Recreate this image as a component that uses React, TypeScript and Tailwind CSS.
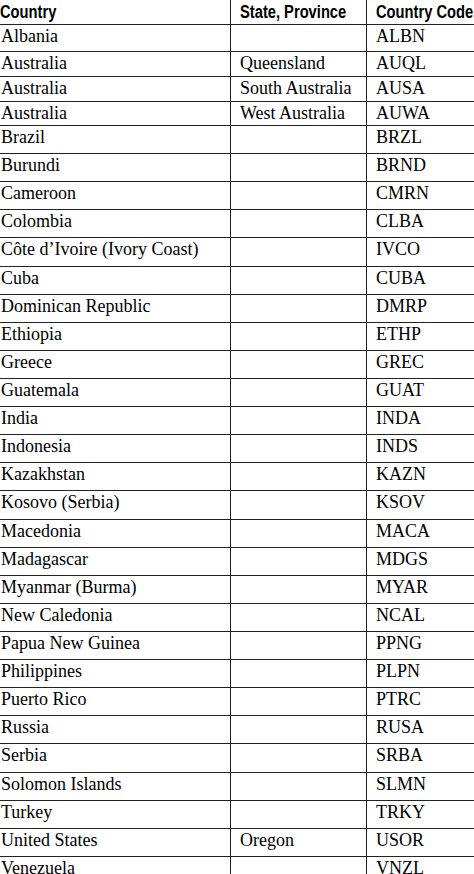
import React from 'react'

type Row = { country: string; state?: string; code: string; h: string }

// row heights follow the source scan: the three Australia sub-rows are tighter
const rows: Row[] = [
  { country: 'Albania', code: 'ALBN', h: 'h-[27px]' },
  { country: 'Australia', state: 'Queensland', code: 'AUQL', h: 'h-[25px]' },
  { country: 'Australia', state: 'South Australia', code: 'AUSA', h: 'h-[25px]' },
  { country: 'Australia', state: 'West Australia', code: 'AUWA', h: 'h-[24px]' },
  { country: 'Brazil', code: 'BRZL', h: 'h-[28.12px]' },
  { country: 'Burundi', code: 'BRND', h: 'h-[28.12px]' },
  { country: 'Cameroon', code: 'CMRN', h: 'h-[28.12px]' },
  { country: 'Colombia', code: 'CLBA', h: 'h-[28.12px]' },
  { country: 'Côte d\u2019Ivoire (Ivory Coast)', code: 'IVCO', h: 'h-[28.12px]' },
  { country: 'Cuba', code: 'CUBA', h: 'h-[28.12px]' },
  { country: 'Dominican Republic', code: 'DMRP', h: 'h-[28.12px]' },
  { country: 'Ethiopia', code: 'ETHP', h: 'h-[28.12px]' },
  { country: 'Greece', code: 'GREC', h: 'h-[28.12px]' },
  { country: 'Guatemala', code: 'GUAT', h: 'h-[28.12px]' },
  { country: 'India', code: 'INDA', h: 'h-[28.12px]' },
  { country: 'Indonesia', code: 'INDS', h: 'h-[28.12px]' },
  { country: 'Kazakhstan', code: 'KAZN', h: 'h-[28.12px]' },
  { country: 'Kosovo (Serbia)', code: 'KSOV', h: 'h-[28.12px]' },
  { country: 'Macedonia', code: 'MACA', h: 'h-[28.12px]' },
  { country: 'Madagascar', code: 'MDGS', h: 'h-[28.12px]' },
  { country: 'Myanmar (Burma)', code: 'MYAR', h: 'h-[28.12px]' },
  { country: 'New Caledonia', code: 'NCAL', h: 'h-[28.12px]' },
  { country: 'Papua New Guinea', code: 'PPNG', h: 'h-[28.12px]' },
  { country: 'Philippines', code: 'PLPN', h: 'h-[28.12px]' },
  { country: 'Puerto Rico', code: 'PTRC', h: 'h-[28.12px]' },
  { country: 'Russia', code: 'RUSA', h: 'h-[28.12px]' },
  { country: 'Serbia', code: 'SRBA', h: 'h-[28.12px]' },
  { country: 'Solomon Islands', code: 'SLMN', h: 'h-[28.12px]' },
  { country: 'Turkey', code: 'TRKY', h: 'h-[28.12px]' },
  { country: 'United States', state: 'Oregon', code: 'USOR', h: 'h-[28.12px]' },
  { country: 'Venezuela', code: 'VNZL', h: 'h-[28.12px]' },
]

// header is set in a narrow bold grotesque; no narrow face installed, so squeeze Liberation Sans
const head = "inline-block origin-left scale-x-[0.84] font-['Liberation_Sans',Arial,sans-serif] font-bold text-[17.5px] leading-[23px] text-black whitespace-nowrap"

export default function App() {
  return (
    <div className="w-[474px] h-[874px] overflow-hidden bg-white">
      <div className="w-[560px] flex flex-col">
        {/* header */}
        <div className="flex h-[25px] border-b border-[#222]">
          <div className="w-[231px] shrink-0 border-r border-[#222]">
            <span className={head}>Country</span>
          </div>
          <div className="w-[136px] shrink-0 border-r border-[#222] pl-[9px]">
            <span className={head}>State, Province</span>
          </div>
          <div className="flex-1 pl-[9px]">
            <span className={head}>Country Code</span>
          </div>
        </div>

        {/* body */}
        {rows.map((r, i) => (
          <div
            key={i}
            className={`flex ${r.h} box-border border-b border-[#222] font-['Liberation_Serif','Times_New_Roman',serif] text-[18px] leading-[22px] text-black`}
          >
            <div className="w-[231px] shrink-0 border-r border-[#222] pl-px whitespace-nowrap">{r.country}</div>
            <div className="w-[136px] shrink-0 border-r border-[#222] pl-[9px] whitespace-nowrap">{r.state ?? ''}</div>
            <div className="flex-1 pl-[9px] whitespace-nowrap">{r.code}</div>
          </div>
        ))}
      </div>
    </div>
  )
}
